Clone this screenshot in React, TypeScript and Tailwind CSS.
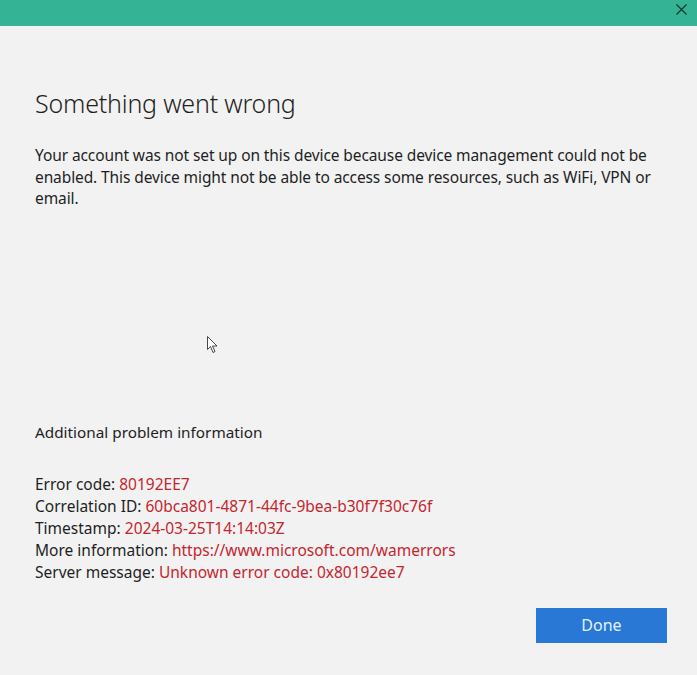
import React from 'react';

function InfoLine({ label, value }: { label: string; value: string }) {
  return (
    <div className="h-[22px] leading-[22px]">
      <span>{label} </span>
      <span className="text-[#c4262e]">{value}</span>
    </div>
  );
}

export default function App() {
  const info = [
    { label: 'Error code:', value: '80192EE7' },
    { label: 'Correlation ID:', value: '60bca801-4871-44fc-9bea-b30f7f30c76f' },
    { label: 'Timestamp:', value: '2024-03-25T14:14:03Z' },
    { label: 'More information:', value: 'https://www.microsoft.com/wamerrors' },
    { label: 'Server message:', value: 'Unknown error code: 0x80192ee7' },
  ];

  return (
    <div className="relative w-[697px] h-[675px] overflow-hidden bg-[#f2f2f2] text-[#1f1f1f] font-['Noto_Sans',sans-serif]">
      <div className="h-[26px] bg-[#34b495] flex justify-end items-start pr-[10px] pt-[3px]">
        <svg width="11" height="11" viewBox="0 0 11 11" className="mt-[1px]">
          <path d="M0.5 0.5 L10.5 10.5 M10.5 0.5 L0.5 10.5" stroke="#15382d" strokeWidth="1.2" fill="none" />
        </svg>
      </div>

      <div className="px-[35px]">
        <h1 className="mt-[62px] h-[30px] leading-[30px] text-[25px] font-light tracking-[-0.2px]">
          Something went wrong
        </h1>
        <p className="mt-[27px] text-[15.5px] leading-[21.5px] tracking-[-0.1px] pr-[5px]">
          Your account was not set up on this device because device management could not be enabled. This device might not be able to access some resources, such as WiFi, VPN or email.
        </p>

        <div className="mt-[211px] h-[22px] leading-[22px] text-[15.3px]">Additional problem information</div>

        <div className="mt-[30px] text-[15.5px]">
          {info.map((item) => (
            <InfoLine key={item.label} label={item.label} value={item.value} />
          ))}
        </div>
      </div>

      <div className="flex justify-end pr-[30px] mt-[25px]">
        <button className="w-[131px] h-[35px] bg-[#2a78d6] text-[#e4f1ff] text-[16px]">Done</button>
      </div>

      <svg className="absolute left-[207px] top-[336px]" width="12" height="18" viewBox="0 0 12 18">
        <path d="M0.5 0.5 L0.5 13.5 L3.5 10.5 L6 16.5 L8 15.5 L5.5 10 L10 10 Z" fill="#ffffff" stroke="#333" strokeWidth="0.9" strokeLinejoin="round" />
      </svg>
    </div>
  );
}
